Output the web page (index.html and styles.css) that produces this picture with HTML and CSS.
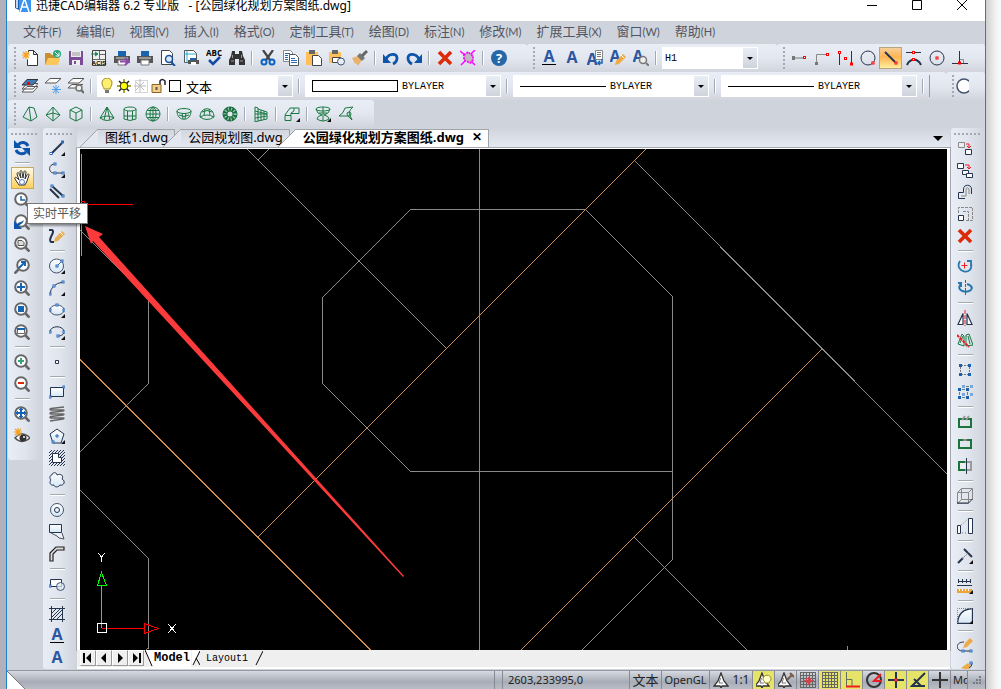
FILE: index.html
```html
<!DOCTYPE html>
<html lang="zh-CN">
  <head>
    <meta charset="UTF-8" />
    <meta name="viewport" content="width=device-width, initial-scale=1.0" />
    <title>迅捷CAD编辑器</title>
    <link rel="stylesheet" href="styles.css" />
  </head>

  <body>
    <!-- icon sprite -->
    <svg class="sprite" aria-hidden="true">
      <defs>
        <linearGradient id="pale" x1="0" y1="0" x2="0" y2="1">
          <stop offset="0" stop-color="#fff" />
          <stop offset="1" stop-color="#d5e6f5" />
        </linearGradient>
      </defs>
      <symbol id="corner" viewBox="0 0 16 16"><path d="M16 12v4h-4z" fill="#111" /></symbol>
      <symbol id="lens" viewBox="0 0 16 16">
        <circle cx="7" cy="7" r="5.8" fill="#fff" stroke="#666" stroke-width="2" />
        <path d="M11.5 11.5l4 4" stroke="#666" stroke-width="2.6" />
      </symbol>

      <!-- file toolbar -->
      <symbol id="new" viewBox="0 0 16 16">
        <path d="M6.5 3.5V.5h5l4 4v11h-10v-6M11.5.5v4h4" fill="#fff" stroke="#333" />
        <path d="M4 1v8M0 5h8M1 2l6 6M7 2L1 8" stroke="#f6a21b" stroke-width="1.2" />
      </symbol>
      <symbol id="open" viewBox="0 0 16 16">
        <path d="M0 3h5l2 2h6v10H0z" fill="#c9912e" /><path d="M3 8h12l-2 7H0z" fill="#ffc65a" />
        <circle cx="12" cy="4" r="4" fill="#27a577" /><path d="M10 2l4 4M14 2.5V6h-3.5" fill="none" stroke="#fff" />
      </symbol>
      <symbol id="save" viewBox="0 0 16 16">
        <path d="M1 1h14v14H1z" fill="#7b4a99" /><path d="M3 1h10v6H3zM4 10h8v5H4z" fill="#eee" /><path d="M4 3h8M4 5h8" stroke="#999" /><path d="M6 11h2v3H6z" fill="#7b4a99" />
      </symbol>
      <symbol id="acis" viewBox="0 0 16 16">
        <path d="M1.5.5h13v15h-13z" fill="#eee" stroke="#444" /><path d="M2 9.5h12M8.5 1v8M8 4.5h6" stroke="#666" />
        <path d="M0 4h6M4 2l3 2-3 2" fill="#198b5f" stroke="#198b5f" />
      </symbol>
      <symbol id="print" viewBox="0 0 16 16">
        <path d="M4 1h8v5H4z" fill="#1965ad" /><path d="M0 6h16v7H0z" fill="#555" /><path d="M2 8h12" stroke="#ddd" /><path d="M4 10h8v5H4z" fill="#fff" stroke="#777" />
      </symbol>
      <symbol id="export" viewBox="0 0 16 16">
        <use href="#print" /><path d="M6 11.5h8M11 8l4 3.5-4 3.5" fill="none" stroke="#9048ae" stroke-width="2" />
      </symbol>
      <symbol id="preview" viewBox="0 0 16 16">
        <path d="M1.5.5h8l3 3v11h-11z" fill="#fff" stroke="#444" /><circle cx="9" cy="9" r="3.5" fill="#d7eafa" stroke="#194f9b" stroke-width="1.5" /><path d="M11 12l4 4" stroke="#194f9b" stroke-width="2" />
      </symbol>
      <symbol id="pagesetup" viewBox="0 0 16 16">
        <path d="M1.5.5h9l3 3v9h-12z" fill="#fff" stroke="#555" /><path d="M4 1v12M1 4h12" stroke="#28a9d8" /><path d="M7 8h6v2H7z" fill="#1965ad" /><path d="M5 10h11v4H5z" fill="#555" /><path d="M8 12h5v3H8z" fill="#fff" />
      </symbol>
      <symbol id="find" viewBox="0 0 16 16">
        <path d="M3 1h3v3h4V1h3l1 5 2 4v5h-6V9H6v6H0v-5l2-4z" fill="#333" /><path d="M2 11h3M11 11h3M3.5 5v3M12.5 5v3" stroke="#999" />
      </symbol>
      <symbol id="cut" viewBox="0 0 16 16"><path d="M3 0l7 10M13 0L6 10" stroke="#444" stroke-width="2.2" /><circle cx="4" cy="12" r="2.5" class="bluering" /><circle cx="12" cy="12" r="2.5" class="bluering" /></symbol>
      <symbol id="copy" viewBox="0 0 16 16">
        <path d="M.5.5h7l2 2v9h-9z" fill="#fff" stroke="#888" /><path d="M6.5 4.5h6l3 3v8h-9z" fill="#fff" stroke="#555" /><path d="M2 3.5h5M2 5.5h3M2 7.5h3M2 9.5h3M8 8.5h4M8 10.5h6M8 12.5h6" stroke="#2467b3" />
      </symbol>
      <symbol id="paste" viewBox="0 0 16 16"><path d="M0 2h12v13H0z" fill="#ffc05a" /><path d="M3 0h6v4H3z" fill="#666" /><path d="M6.5 5.5h6l3 3v7h-9z" fill="#fff" stroke="#444" /></symbol>
      <symbol id="pasteblock" viewBox="0 0 16 16"><path d="M0 2h12v11H0z" fill="#ffc05a" /><path d="M3 0h6v4H3z" fill="#666" /><path d="M3.5 7.5h8v5h-8z" fill="#fff" stroke="#444" /><circle cx="12" cy="11.5" r="3.5" fill="#e5edf5" stroke="#405478" /></symbol>
      <symbol id="brush" viewBox="0 0 16 16"><path d="M0 8l6-2 4 4-4 6-2-3-1 1z" fill="#e8b36c" /><path d="M5 6l3-3 5 5-3 3z" fill="#777" /><path d="M10 6l5-5" stroke="#666" stroke-width="3" /></symbol>
      <symbol id="undo" viewBox="0 0 16 16"><path d="M3 9c3-6 11-6 11-1 0 3-2 5-4 6" fill="none" stroke="#0c55aa" stroke-width="2.8" /><path d="M0 4v9h8z" fill="#0c55aa" /></symbol>
      <symbol id="redo" viewBox="0 0 16 16"><use href="#undo" transform="translate(16 0) scale(-1 1)" /></symbol>
      <symbol id="delete" viewBox="0 0 16 16"><path d="M2 2l12 12M14 2L2 14" stroke="#db2b08" stroke-width="3.6" /></symbol>
      <symbol id="purge" viewBox="0 0 16 16"><path d="M0 1l5 4M15 0l-4 4M1 15l4-4M15 15l-4-4" stroke="#f0f" stroke-width="1.5" /><path d="M4 5l4-3 5 4v4l-3 3-6-3z" fill="#bbb" stroke="#f0f" stroke-width="1.8" stroke-dasharray="2 1" /></symbol>

      <!-- snaps -->
      <symbol id="snap-end" viewBox="0 0 16 16"><path d="M3 8h10" stroke="#777" /><path d="M1 6h3v4H1z" fill="#777" /><rect x="12.5" y="6.5" width="2" height="2" class="red" /></symbol>
      <symbol id="snap-near" viewBox="0 0 16 16"><path d="M2.5 13V4.5H13" class="gray" /><path d="M1 12h3v3H1z" fill="#777" /><rect x="12.5" y="3.5" width="2" height="2" class="red" /></symbol>
      <symbol id="snap-mid" viewBox="0 0 16 16"><path d="M2.500 3v12M14.500 1v12" class="ink" /><rect x="1.500" y="1.500" width="2" height="2" class="red" /><rect x="7.500" y="7.500" width="2" height="2" class="red" /><rect x="13.500" y="13" width="2" height="2" class="red" /></symbol>
      <symbol id="snap-circle" viewBox="0 0 16 16"><circle cx="8" cy="8" r="7" class="ink" /><rect x="12" y="12" width="2" height="2" class="red" /></symbol>
      <symbol id="snap-line" viewBox="0 0 16 16"><path d="M2 2l10 10" class="ink thick" /><rect x="12" y="12" width="2" height="2" class="red" /></symbol>
      <symbol id="snap-tan" viewBox="0 0 16 16"><path d="M0 2.500h15" class="ink" /><path d="M1 15c3-7 11-7 14 0" class="ink thick" /><rect x="6.500" y="1.500" width="2" height="2" class="red" /><rect x="6.500" y="8.500" width="2" height="2" class="red" /></symbol>
      <symbol id="snap-centre" viewBox="0 0 16 16"><circle cx="8" cy="8" r="7" class="ink" /><rect x="7" y="7" width="2" height="2" class="red" /></symbol>
      <symbol id="snap-perp" viewBox="0 0 16 16"><path d="M7.500 1v12M0 13.500h16" class="ink" /><path d="M8 9.500h3.500V13" class="gray" /><rect x="6.500" y="12" width="2" height="2" class="red" /></symbol>
      <symbol id="disc" viewBox="0 0 16 16"><circle cx="8" cy="8" r="7" fill="#fff" stroke="#44536c" stroke-width="1.5" /></symbol>

      <!-- layers -->
      <symbol id="layers" viewBox="0 0 16 16"><path d="M5 8.500h11L11 14H0zM5 5.500h11L11 11H0z" class="sheet" /><path d="M5 1.500h11L11 7H0z" fill="#407cb5" stroke="#333" /><path d="M5 4h3v3H5z" fill="#f00" /></symbol>
      <symbol id="layer-new" viewBox="0 0 16 16"><path d="M5 .5h11L11 5H0z" class="sheet" /><path d="M11 7v9M7 11.500h9M8 8l6 7M14 8l-6 7" stroke="#4a9be9" /></symbol>
      <symbol id="layer-find" viewBox="0 0 16 16"><path d="M5 .5h11L11 5H0zM4 6.500h11M4 6.500L0 10h8" class="sheet" /><circle cx="11" cy="10" r="3" fill="#eee" stroke="#777" stroke-width="1.500" /><path d="M13 12l3 3" stroke="#666" stroke-width="2" /></symbol>
      <symbol id="bulb" viewBox="0 0 16 16"><path d="M5 11c0-2-2-3-2-6a5 5 0 0 1 10 0c0 3-2 4-2 6z" fill="#ffef70" stroke="#9c8b20" /><path d="M6 12h4v3H6z" fill="#777" /></symbol>
      <symbol id="sun" viewBox="0 0 16 16"><path d="M8 1v14M1 8h14M3 3l10 10M13 3L3 13" stroke="#222" stroke-width="1.500" /><path d="M8 1v14M1 8h14" stroke="#ff0" /><circle cx="8" cy="8" r="3.800" fill="#ff0" stroke="#222" /></symbol>
      <symbol id="freeze" viewBox="0 0 16 16"><path d="M2.500 2.500h12v12h-12z" fill="none" stroke="#aaa" stroke-dasharray="1 1" /><path d="M7 1v13M1 8h12M3 4l8 8M11 4l-8 8" stroke="#bbb" /></symbol>
      <symbol id="unlock" viewBox="0 0 16 16"><path d="M10 7V3q2-3 5 0v4" fill="none" stroke="#223" stroke-width="1.500" /><path d="M2 6.500h9v8H2z" fill="#eecf8c" stroke="#8c651e" /><path d="M6.500 9v3" stroke="#654" stroke-width="2" /></symbol>

      <!-- surfaces -->
      <symbol id="wedge" viewBox="0 0 16 16"><path d="M1 11L7 1l5 1 3 9-6 4-8-4M7 1l2 14" class="green" /></symbol>
      <symbol id="pyramid" viewBox="0 0 16 16"><path d="M8 1l7 8-7 6-7-6zM8 1v14M1 9l7-2 7 2" class="green" /></symbol>
      <symbol id="cube" viewBox="0 0 16 16"><path d="M8 1l6 3v8l-6 3-6-3V4zM2 4l6 3 6-3M8 7v8" class="green" /></symbol>
      <symbol id="cone" viewBox="0 0 16 16"><path d="M8 1L1 12q7 5 14 0zM8 1L5 14M8 1l3 13M1 12q7-4 14 0" class="green" /></symbol>
      <symbol id="cylinder" viewBox="0 0 16 16"><ellipse cx="8" cy="3" rx="6" ry="2" class="green" /><path d="M2 3v10q6 3 12 0V3M5.500 5v9M10.500 5v9M2 10h12" class="green" /></symbol>
      <symbol id="sphere" viewBox="0 0 16 16"><circle cx="8" cy="8" r="7" class="green" /><ellipse cx="8" cy="8" rx="3" ry="7" class="green" /><path d="M1 8h14M2 4.500h12M2 11.500h12M8 1v14" class="green" /></symbol>
      <symbol id="bowl" viewBox="0 0 16 16"><ellipse cx="8" cy="5" rx="7" ry="2.500" class="green" /><path d="M1 5c0 11 14 11 14 0M3 9q5 3 10 0M6 7l1 6M10 7l-1 6" class="green" /></symbol>
      <symbol id="dome" viewBox="0 0 16 16"><path d="M1 11C1 0 15 0 15 11q-7 5-14 0zM1 11q7-4 14 0M3 6q5-3 10 0M6 3L5 9M10 3l1 6" class="green" /></symbol>
      <symbol id="torus" viewBox="0 0 16 16"><circle cx="8" cy="8" r="5" fill="none" stroke="#1a7140" stroke-width="5" /><circle cx="8" cy="8" r="5" fill="none" stroke="#a6c7b4" stroke-width="3" stroke-dasharray="1 2" /></symbol>
      <symbol id="mesh" viewBox="0 0 16 16"><path d="M2 1l3 1v13l-3 1zM5 3l9 3v7l-9 2M2 5l12 3M2 8h12M2 12l12-2M8 4v11M11 5v9" class="green" /></symbol>
      <symbol id="extrude" viewBox="0 0 16 16"><path d="M1 9.500h6v5H1zM1 9l5-7h9v5.500H7M7 9V7l3-2V2" class="green" /><use href="#corner" /></symbol>
      <symbol id="revolve" viewBox="0 0 16 16"><ellipse cx="8" cy="3" rx="7" ry="2" class="green" /><path d="M1 3q1 5 6 6-5 1-5 4 6 4 12 0 0-3-5-4 5-1 6-6M8 1v14M4 7h8" class="green" /><use href="#corner" /></symbol>
      <symbol id="edge" viewBox="0 0 16 16"><path d="M1 10q5-3 6-8l8-1q-3 2-4 6l3 7M1 10h9l4 4" class="green" /><circle cx="11" cy="8" r="2" class="green" /></symbol>

      <!-- view toolbar -->
      <symbol id="regen" viewBox="0 0 16 16"><path d="M4 5c3-4 8-3 10 1M12 12c-3 3-8 2-10-2" fill="none" stroke="#0c55aa" stroke-width="3" /><path d="M0 0v8h8zM16 16V8H8z" fill="#0c55aa" /></symbol>
      <symbol id="hand" viewBox="0 0 16 16"><path d="M5 15L1 9c-1-2 1-2 2-1l2 2L3 4c0-2 2-2 2 0l2 4-1-6c0-2 2-2 2 0l1 6 1-6c0-2 2-1 2 0l-1 7 2-4c1-2 2-1 2 0l-2 6-2 4z" fill="#fff" stroke="#333" /><circle cx="8" cy="12" r="2.500" fill="#fff" stroke="#557ab5" /></symbol>
      <symbol id="zoom-time" viewBox="0 0 16 16"><use href="#lens" /><path d="M7 4v4h4" fill="none" stroke="#1761ae" stroke-width="1.500" /></symbol>
      <symbol id="zoom-back" viewBox="0 0 16 16"><use href="#lens" /><path d="M0 7v8h8l-3-3c1-2 4-2 5-6-2 2-5 2-7 4z" fill="#0c55aa" /></symbol>
      <symbol id="zoom-page" viewBox="0 0 16 16"><use href="#lens" /><path d="M4 4.500h4l2 2v3H4z" fill="#ddd" stroke="#555" /></symbol>
      <symbol id="zoom-dyn" viewBox="0 0 16 16"><use href="#lens" transform="translate(16 0) scale(-1 1)" /><path d="M5 10l6-6M7 4h4v4" class="blue" /></symbol>
      <symbol id="zoom-centre" viewBox="0 0 16 16"><use href="#lens" /><path d="M7 3v8M3 7h8" class="blue" /></symbol>
      <symbol id="zoom-object" viewBox="0 0 16 16"><use href="#lens" /><path d="M4 4h6v6H4z" fill="#1565b4" /></symbol>
      <symbol id="zoom-window" viewBox="0 0 16 16"><use href="#lens" /><path d="M3.500 4.500h7v5h-7z" fill="#fff" stroke="#666" /><path d="M3 5h8" stroke="#1565b4" stroke-width="2" /></symbol>
      <symbol id="zoom-in" viewBox="0 0 16 16"><use href="#lens" /><path d="M7 4v6M4 7h6" stroke="#35a47b" stroke-width="2" /></symbol>
      <symbol id="zoom-out" viewBox="0 0 16 16"><use href="#lens" /><path d="M4 7h6" stroke="#dc2800" stroke-width="2" /></symbol>
      <symbol id="zoom-all" viewBox="0 0 16 16"><use href="#lens" /><path d="M7 2v10M2 7h10" class="blue" /><path d="M5 3.500h4M5 10.500h4M3.500 5v4M10.500 5v4" stroke="#1565b4" /></symbol>
      <symbol id="eye" viewBox="0 0 16 16"><path d="M1 10q7-8 15 0-8 7-15 0z" fill="#fff" stroke="#555" stroke-width="1.500" /><circle cx="9" cy="10" r="3.500" fill="#333" /><circle cx="10" cy="9" r="1" fill="#fff" /><path d="M4 0v8M0 4h8M1 1l6 6M7 1L1 7" stroke="#f6a21b" stroke-width="1.200" /></symbol>

      <!-- draw toolbar -->
      <symbol id="line" viewBox="0 0 16 16"><path d="M2 14L13 3" class="ink thick" /><rect x="1" y="12.500" width="2" height="2" class="node" /><rect x="12.500" y="1" width="2" height="2" class="node" /><use href="#corner" /></symbol>
      <symbol id="pline" viewBox="0 0 16 16"><path d="M6 2C-1 2-1 11 5 11h9" class="ink" /><rect x="5" y="1" width="2" height="2" class="node" /><rect x="5" y="10" width="2" height="2" class="node" /><rect x="13" y="10" width="2" height="2" class="node" /><use href="#corner" /></symbol>
      <symbol id="mline" viewBox="0 0 16 16"><path d="M3 2l11 10M1 5l9 9" class="ink thick" /><rect x="2" y="1" width="2" height="2" class="node" /><rect x="13" y="11" width="2" height="2" class="node" /></symbol>
      <symbol id="sketch" viewBox="0 0 16 16"><path d="M0 2h3c4 2-5 9-1 12h3" class="ink thick" /><path d="M5 14l1-4 7-7 3 3-7 7z" fill="#e8ae53" /><path d="M11 4l3 3" stroke="#fff" /></symbol>
      <symbol id="circle" viewBox="0 0 16 16"><circle cx="7.500" cy="8" r="7" fill="url(#pale)" stroke="#44536c" /><path d="M8 8l4-4" stroke="#2467b3" /><rect x="7" y="7" width="2" height="2" class="node" /><rect x="12" y="2" width="2" height="2" class="node" /><use href="#corner" /></symbol>
      <symbol id="arc" viewBox="0 0 16 16"><path d="M1 14Q2 4 14 2" class="ink" /><rect x="0" y="13" width="2" height="2" class="node" /><rect x="4" y="5" width="2" height="2" class="node" /><rect x="13" y="1" width="2" height="2" class="node" /><use href="#corner" /></symbol>
      <symbol id="ellipse" viewBox="0 0 16 16"><ellipse cx="8" cy="8" rx="7" ry="5" fill="url(#pale)" stroke="#44536c" /><rect x="7" y="2" width="2" height="2" class="node" /><rect x="0" y="7" width="2" height="2" class="node" /><rect x="14" y="7" width="2" height="2" class="node" /><use href="#corner" /></symbol>
      <symbol id="earc" viewBox="0 0 16 16"><path d="M1 8c0-7 14-7 14 0 0 3-4 4-6 4" class="ink" /><rect x="0" y="7" width="2" height="2" class="node" /><rect x="14" y="7" width="2" height="2" class="node" /><rect x="8" y="11" width="2" height="2" class="node" /><use href="#corner" /></symbol>
      <symbol id="point" viewBox="0 0 16 16"><path d="M6.500 6.500h3v3h-3z" fill="#fff" stroke="#25354e" /></symbol>
      <symbol id="rect" viewBox="0 0 16 16"><path d="M1.500 3.500h13v9h-13z" fill="url(#pale)" stroke="#25354e" /><rect x="0" y="12" width="2" height="2" class="node" /><rect x="14" y="2" width="2" height="2" class="node" /></symbol>
      <symbol id="helix" viewBox="0 0 16 16"><path d="M15 1L2 2.500q-2 1 0 1.500h12q2 0 0 1L2 6.500q-2 1 0 1.500h12q2 0 0 1L2 10.500q-2 1 0 1.500h12q2 0 0 1L1 15" fill="none" stroke="#666" stroke-width="1.500" /></symbol>
      <symbol id="polygon" viewBox="0 0 16 16"><path d="M8 1l7 5-3 9H4L1 6z" fill="url(#pale)" stroke="#25354e" /><path d="M8 6v4M6 8h4" stroke="#2467b3" /><rect x="3" y="13" width="2" height="2" class="node" /><use href="#corner" /></symbol>
      <symbol id="boundary" viewBox="0 0 16 16"><path d="M0 3l3-3M0 6l6-6M0 9l9-9M0 12l12-12M0 15L15 0M1 17L17 1M4 17L17 4M7 17L17 7M10 17l7-7M13 17l4-4" stroke="#25354e" /><path d="M3.500 3.500h6v4h3v5h-9z" fill="#fff" stroke="#25354e" /></symbol>
      <symbol id="cloud" viewBox="0 0 16 16"><path d="M3 3c0-3 5-3 5 0 4-2 7 1 5 4 4 2 2 7-2 6-2 3-6 2-6 0-4 1-5-3-3-5-2-2-1-5 1-5z" fill="url(#pale)" stroke="#25354e" /></symbol>
      <symbol id="donut" viewBox="0 0 16 16"><circle cx="8" cy="8" r="6.500" fill="url(#pale)" stroke="#44536c" /><circle cx="8" cy="8" r="2.500" class="ink" /></symbol>
      <symbol id="wipeout" viewBox="0 0 16 16"><path d="M.5.5h12v8H.5z" fill="url(#pale)" stroke="#25354e" /><path d="M2 9l6 3 2 2 5 1-2-6" fill="#eee" stroke="#44536c" /></symbol>
      <symbol id="trace" viewBox="0 0 16 16"><path d="M1 15V7l6-6h8v3H8L4 8v7z" fill="#ddd" stroke="#222" stroke-width="1.200" /></symbol>
      <symbol id="region" viewBox="0 0 16 16"><path d="M1.500 3.500h11v7h-11z" fill="#fff" stroke="#25354e" /><circle cx="11.500" cy="10.500" r="4" fill="#dce9f5" fill-opacity=".7" stroke="#44536c" /><rect x="0" y="9" width="2" height="2" class="node" /></symbol>
      <symbol id="hatch" viewBox="0 0 16 16"><path d="M0 2.500h16M0 13.500h16M2.500 0v16M13.500 0v16M3 7l4-4M3 11l8-8M4 13l9-9M8 13l5-5" class="ink" /></symbol>

      <!-- modify toolbar -->
      <symbol id="moveto" viewBox="0 0 16 16"><path d="M1.500 2.500h6v5h-6z" fill="#eee" stroke="#888" /><path d="M8.500 9.500h6v5h-6z" fill="#fff" stroke="#25354e" /><path d="M9 4h3v3M10 6l2 2 2-2" class="redline" /></symbol>
      <symbol id="copyto" viewBox="0 0 16 16"><path d="M.5 1.500h6v5h-6zM5.500 8.500h6v4h-6z" fill="#fff" stroke="#25354e" /><path d="M9.500 11.500h6v4h-6z" fill="#fff" stroke="#25354e" /><path d="M8 3h4v3M10 5l2 2 2-2" class="redline" /></symbol>
      <symbol id="offset" viewBox="0 0 16 16"><path d="M8 14.500H1.500V8.500h5V5c0-5 8-5 8 0v5" class="ink" /><path d="M4 12h5V6c0-3 3-3 3 0v4" class="gray" /></symbol>
      <symbol id="scale" viewBox="0 0 16 16"><path d="M1.500 7V1.500h14v13H9M6 5.500h5.500v9" fill="none" stroke="#888" stroke-dasharray="3 1" /><path d="M1.500 9.500h5v5h-5z" fill="#fff" stroke="#25354e" /></symbol>
      <symbol id="rotate" viewBox="0 0 16 16"><path d="M3 3c-7 11 14 16 11 2M10 3h4v5" fill="none" stroke="#2778ad" stroke-width="1.800" /><path d="M7.500 4.500v6M4.500 7.500h6" class="redline" /></symbol>
      <symbol id="rotate3d" viewBox="0 0 16 16"><path d="M4 4c-7 7 9 11 11 4-1-3-5-4-5-4M4 7V3H1" fill="none" stroke="#2778ad" stroke-width="2" /><path d="M8.500 0v16" class="redline" stroke-dasharray="3 1" /></symbol>
      <symbol id="mirror" viewBox="0 0 16 16"><path d="M1 14.500l5-11v11zM15 14.500l-5-11v11z" fill="#fff" stroke="#25354e" stroke-width="1.200" /><path d="M8 0v16" class="redline" stroke-dasharray="4 1" /></symbol>
      <symbol id="mirror3d" viewBox="0 0 16 16"><path d="M1 12L5 2l2 2v10zM9 14V3l3-1 4 11zM3 11l3-7M11 4l2 8" class="green" /><path d="M0 3l12 12" class="redline" stroke-width="2" stroke-dasharray="3 1" /></symbol>
      <symbol id="array" viewBox="0 0 16 16"><path d="M4 3.500h8M4 12.500h8M3.500 5v6M12.500 5v6" stroke="#777" stroke-dasharray="2 1" /><path d="M2 2h3v3H2zM11 2h3v3h-3zM2 11h3v3H2zM11 11h3v3h-3z" fill="#1861b1" /></symbol>
      <symbol id="array3d" viewBox="0 0 16 16"><path d="M5 1h3v3H5zM13 1h3v3h-3zM5 9h3v3H5zM13 9h3v3h-3z" fill="#7aa8d7" /><path d="M1 4h3v3H1zM9 4h3v3H9zM1 12h3v3H1zM9 12h3v3H9z" fill="#1861b1" /><path d="M5 5.500h3M5 13.500h3M2.500 8v3M10.500 8v3M9 2.500h3" stroke="#777" /></symbol>
      <symbol id="break" viewBox="0 0 16 16"><path d="M2 5h12v8H2z" fill="none" stroke="#1b743c" stroke-width="2" /><path d="M5 6l3-4M9 6l3-4" stroke="#999" stroke-width="2" /></symbol>
      <symbol id="join" viewBox="0 0 16 16"><path d="M2 4h12v8H2z" fill="none" stroke="#1b743c" stroke-width="2" /><path d="M6 4h4" stroke="#888" stroke-width="2" /></symbol>
      <symbol id="trim" viewBox="0 0 16 16"><path d="M8 4H2v8h6" fill="#eee" stroke="#1b743c" stroke-width="2" /><path d="M8 4h6v8H8" fill="none" stroke="#999" stroke-width="2" /><path d="M9.500 0v16" class="ink" /></symbol>
      <symbol id="solid" viewBox="0 0 16 16"><path d="M4.500.5h11v11h-11zM.5 4.500h11v11H.5zM4.500.5l-4 4M15.500.5l-4 4M4.500 11.500l-4 4" class="gray" /><path d="M0 15h11.500l4-4" class="ink" /></symbol>
      <symbol id="stretch" viewBox="0 0 16 16"><path d="M.5 7.500h3v8h-3zM11.500.5h4v15h-4z" fill="#fff" stroke="#25354e" /><path d="M4 7l7-6M5 15h6" stroke="#777" stroke-dasharray="1 2" /></symbol>
      <symbol id="extend" viewBox="0 0 16 16"><path d="M7 1l8 8M1 15l5-5" class="ink thick" /><path d="M5 11l7-7" stroke="#777" stroke-dasharray="2 1" /><use href="#corner" /></symbol>
      <symbol id="measure" viewBox="0 0 16 16"><path d="M1.500 1v4M5.500 1v4M9.500 1v4M13.500 1v4M0 7.500h15M1 3.500h13" class="ink" /><path d="M0 11h15v4H0z" fill="#eaa63b" /><path d="M2.500 11v2M5.500 11v2M8.500 11v2M11.500 11v2" stroke="#fff" /><use href="#corner" /></symbol>
      <symbol id="fillet" viewBox="0 0 16 16"><path d="M.5 15.500C1 6 6 1 15.500.5v15z" fill="url(#pale)" stroke="#25354e" stroke-width="1.300" /><path d="M.5 15V.5H15" class="gray" stroke-dasharray="1 1" /><use href="#corner" /></symbol>
      <symbol id="pedit" viewBox="0 0 16 16"><path d="M7 4C-2 4-2 13 6 13h8" class="ink" /><path d="M6 10l2-5 5-5 3 3-6 6z" fill="#edaa46" /><rect x="5" y="12" width="2" height="2" class="node" /><rect x="13" y="12" width="2" height="2" class="node" /></symbol>
      <symbol id="splinedit" viewBox="0 0 16 16"><path d="M4 8l7-5 3 3-3 4z" fill="#edaa46" /><path d="M12 8q3-1 3-5" class="ink" /><rect x="13" y="2" width="2" height="2" class="node" /></symbol>

      <!-- status bar -->
      <symbol id="compass" viewBox="0 0 16 16"><path d="M8 1l3 8 4 5H9l-1 2-1-2H1l4-5z" fill="#fff" stroke="#333" stroke-width="1.300" /><path d="M7.500 6L6 11h4" fill="none" stroke="#777" /></symbol>
      <symbol id="compass-bulb" viewBox="0 0 16 16"><use href="#compass" x="-2" /><path d="M9 11c0-2-2-2-2-4 0-5 8-5 8 0 0 2-2 2-2 4z" fill="#ffffc5" stroke="#998b28" /></symbol>
      <symbol id="compass-pen" viewBox="0 0 16 16"><use href="#compass" x="-2" /><path d="M9 8l5-5M12 1l4 4" stroke="#775b45" stroke-width="2" /></symbol>
      <symbol id="grid" viewBox="0 0 16 16"><path d="M0 .5h16M0 3.500h16M0 6.500h16M0 9.500h16M0 12.500h16M.5 0v16M3.500 0v16M6.500 0v16M9.500 0v16M12.500 0v16M15.500 0v16M0 15.500h16" stroke="#666" /></symbol>
      <symbol id="gridsnap" viewBox="0 0 16 16"><use href="#grid" /><path d="M3 8.500h11M8.500 5v8M6.500 6.500h4v4h-4z" stroke="#d2474d" fill="none" /></symbol>
      <symbol id="ortho" viewBox="0 0 16 16"><path d="M2.500 0v14M3 7.500h5V14" stroke="#667060" fill="none" /><path d="M2 14.500h14" class="redline" stroke-width="2" /></symbol>
      <symbol id="polar" viewBox="0 0 16 16"><circle cx="8" cy="8" r="7" fill="none" stroke="#333" stroke-width="2" /><path d="M15 2L8 9h8" class="redline" stroke-width="2" /></symbol>
      <symbol id="osnap" viewBox="0 0 16 16"><path d="M8 0v16M0 8h16" class="ink thick" /><rect x="7" y="7" width="2" height="2" class="red" /></symbol>
      <symbol id="otrack" viewBox="0 0 16 16"><path d="M15 1L2 14h13M4 7l7 7" class="ink thick" /></symbol>
      <symbol id="cross" viewBox="0 0 16 16"><path d="M8 0v16M0 8h16" stroke="#333" stroke-width="2" /></symbol>
    </svg>

    <div class="desktop">
      <div class="window">
        <header class="titlebar">
          <svg class="logo" viewBox="0 0 16 12" aria-hidden="true">
            <path d="M0 0h4v10l-4-2z" fill="#1b5fb4" /><path d="M4 0h12v12H4z" fill="#3a93ee" />
            <path d="M2 0v8M5 12L9 0h1l4 12M7 7h5" fill="none" stroke="#fff" stroke-width="1.500" />
          </svg>
          <h1>迅捷CAD编辑器 6.2 专业版 &nbsp; - [公园绿化规划方案图纸.dwg]</h1>
          <div class="window-buttons">
            <button aria-label="最小化"><svg viewBox="0 0 10 10"><path d="M0 5.500h10" /></svg></button>
            <button aria-label="最大化"><svg viewBox="0 0 10 10"><path d="M.5.5h9v9h-9z" /></svg></button>
            <button aria-label="关闭"><svg viewBox="0 0 10 10"><path d="M0 0l10 10M10 0L0 10" /></svg></button>
          </div>
        </header>

        <nav class="menu">
          <a href="#">文件<span>(F)</span></a>
          <a href="#">编辑<span>(E)</span></a>
          <a href="#">视图<span>(V)</span></a>
          <a href="#">插入<span>(I)</span></a>
          <a href="#">格式<span>(O)</span></a>
          <a href="#">定制工具<span>(T)</span></a>
          <a href="#">绘图<span>(D)</span></a>
          <a href="#">标注<span>(N)</span></a>
          <a href="#">修改<span>(M)</span></a>
          <a href="#">扩展工具<span>(X)</span></a>
          <a href="#">窗口<span>(W)</span></a>
          <a href="#">帮助<span>(H)</span></a>
        </nav>

        <div class="toolbar-row">
          <div class="toolbar spaced">
            <i class="grip"></i>
            <button aria-label="新建"><svg><use href="#new" /></svg></button>
            <button aria-label="打开"><svg><use href="#open" /></svg></button>
            <button aria-label="保存"><svg><use href="#save" /></svg></button>
            <button aria-label="ACIS"><svg viewBox="0 0 16 16"><use href="#acis" /><text x="8" y="15" text-anchor="middle" class="tiny">ACIS</text></svg></button>
            <button aria-label="输出"><svg><use href="#export" /></svg></button>
            <button aria-label="打印"><svg><use href="#print" /></svg></button>
            <button aria-label="打印预览"><svg><use href="#preview" /></svg></button>
            <button aria-label="页面设置"><svg><use href="#pagesetup" /></svg></button>
            <button aria-label="拼写检查"><svg viewBox="0 0 16 16"><text x="8" y="6" text-anchor="middle" class="abc">ABC</text><path d="M3 10l4 4 7-7" fill="none" stroke="#1449a6" stroke-width="2.500" /></svg></button>
            <button aria-label="查找"><svg><use href="#find" /></svg></button>
            <i class="sep"></i>
            <button aria-label="剪切"><svg><use href="#cut" /></svg></button>
            <button aria-label="复制"><svg><use href="#copy" /></svg></button>
            <button aria-label="粘贴"><svg><use href="#paste" /></svg></button>
            <button aria-label="粘贴为块"><svg><use href="#pasteblock" /></svg></button>
            <button aria-label="特性匹配"><svg><use href="#brush" /></svg></button>
            <i class="sep"></i>
            <button aria-label="撤销"><svg><use href="#undo" /></svg></button>
            <button aria-label="重做"><svg><use href="#redo" /></svg></button>
            <i class="sep"></i>
            <button aria-label="删除"><svg><use href="#delete" /></svg></button>
            <button aria-label="清理"><svg><use href="#purge" /></svg></button>
            <i class="sep"></i>
            <button aria-label="帮助"><svg viewBox="0 0 16 16"><circle cx="8" cy="8" r="8" fill="#2567a8" /><text x="8" y="13" text-anchor="middle" class="question">?</text></svg></button>
          </div>
          <div class="toolbar spaced">
            <i class="grip"></i>
            <button aria-label="多行文字"><svg viewBox="0 0 16 16"><text x="8" y="12" text-anchor="middle" class="letter">A</text><path d="M1 14.500h14" stroke="#000" /></svg></button>
            <button aria-label="单行文字"><svg viewBox="0 0 16 16"><text x="8" y="13" text-anchor="middle" class="letter">A</text></svg></button>
            <button aria-label="文字导入">
              <svg viewBox="0 0 16 16"><text x="5" y="15" text-anchor="middle" class="letter">A</text><path d="M8.500.5h7v9h-7z" fill="#fff" stroke="#888" /><path d="M10 2.500h4M10 4.500h4M10 6.500h4" stroke="#777" /><path d="M15 9v4h-4M13 11l-2 2 2 2" fill="none" stroke="#1c62b2" stroke-width="1.500" /></svg>
            </button>
            <button aria-label="编辑文字">
              <svg viewBox="0 0 16 16"><text x="5" y="12" text-anchor="middle" class="letter">A</text><path d="M5 15l1-4 7-7 3 3-7 7z" fill="#edaa46" /><path d="M11 5l3 3" stroke="#fff" /></svg>
            </button>
            <button aria-label="查找文字">
              <svg viewBox="0 0 16 16"><text x="5" y="12" text-anchor="middle" class="letter">A</text><circle cx="10" cy="10" r="3.500" fill="#eee" stroke="#777" stroke-width="1.500" /><path d="M13 13l3 3" stroke="#777" stroke-width="2" /></svg>
            </button>
            <i class="sep"></i>
            <div class="combo small">
              <select aria-label="文字样式"><option>H1</option></select>
              <i class="drop"></i>
            </div>
          </div>
          <div class="toolbar fill">
            <i class="grip"></i>
            <button aria-label="端点"><svg><use href="#snap-end" /></svg></button>
            <button aria-label="最近点"><svg><use href="#snap-near" /></svg></button>
            <button aria-label="中点"><svg><use href="#snap-mid" /></svg></button>
            <button aria-label="象限点"><svg><use href="#snap-circle" /></svg></button>
            <button class="on" aria-label="延长线"><svg><use href="#snap-line" /></svg></button>
            <button aria-label="切点"><svg><use href="#snap-tan" /></svg></button>
            <button aria-label="圆心"><svg><use href="#snap-centre" /></svg></button>
            <button aria-label="垂足"><svg><use href="#snap-perp" /></svg></button>
          </div>
        </div>

        <div class="toolbar-row">
          <div class="toolbar fill">
            <i class="grip"></i>
            <button aria-label="图层"><svg><use href="#layers" /></svg></button>
            <button aria-label="新图层"><svg><use href="#layer-new" /></svg></button>
            <button aria-label="查找图层"><svg><use href="#layer-find" /></svg></button>
            <i class="sep"></i>
            <div class="combo layer">
              <svg><use href="#bulb" /></svg>
              <svg><use href="#sun" /></svg>
              <svg><use href="#freeze" /></svg>
              <svg><use href="#unlock" /></svg>
              <b class="swatch square"></b>
              <select aria-label="图层列表"><option>文本</option></select>
              <i class="drop"></i>
            </div>
            <i class="sep"></i>
            <div class="combo">
              <b class="swatch"></b>
              <select aria-label="颜色"><option>BYLAYER</option></select>
              <i class="drop"></i>
            </div>
            <i class="sep"></i>
            <div class="combo">
              <b class="rule"></b>
              <select aria-label="线型"><option>BYLAYER</option></select>
              <i class="drop"></i>
            </div>
            <i class="sep"></i>
            <div class="combo">
              <b class="rule"></b>
              <select aria-label="线宽"><option>BYLAYER</option></select>
              <i class="drop"></i>
            </div>
            <i class="sep"></i>
            <i class="bar"></i>
          </div>
          <div class="toolbar clipped">
            <i class="grip"></i>
            <button aria-label="圆"><svg><use href="#disc" /></svg></button>
          </div>
        </div>

        <div class="toolbar-row last">
          <div class="toolbar spaced">
            <i class="grip"></i>
            <button aria-label="楔体"><svg><use href="#wedge" /></svg></button>
            <button aria-label="棱锥"><svg><use href="#pyramid" /></svg></button>
            <button aria-label="长方体"><svg><use href="#cube" /></svg></button>
            <i class="sep"></i>
            <button aria-label="圆锥"><svg><use href="#cone" /></svg></button>
            <button aria-label="圆柱"><svg><use href="#cylinder" /></svg></button>
            <button aria-label="球体"><svg><use href="#sphere" /></svg></button>
            <i class="sep"></i>
            <button aria-label="下半球"><svg><use href="#bowl" /></svg></button>
            <button aria-label="上半球"><svg><use href="#dome" /></svg></button>
            <button aria-label="圆环"><svg><use href="#torus" /></svg></button>
            <i class="sep"></i>
            <button aria-label="网格"><svg><use href="#mesh" /></svg></button>
            <i class="sep"></i>
            <button aria-label="拉伸"><svg><use href="#extrude" /></svg></button>
            <i class="sep"></i>
            <button aria-label="旋转曲面"><svg><use href="#revolve" /></svg></button>
            <button aria-label="边界曲面"><svg><use href="#edge" /></svg></button>
          </div>
        </div>

        <main class="workspace">
          <div class="sidebar short">
            <i class="grip"></i>
            <button aria-label="重生成"><svg><use href="#regen" /></svg></button>
            <i class="sep"></i>
            <button class="hover" aria-describedby="tip" aria-label="实时平移">
              <svg><use href="#hand" /></svg>
              <span class="tooltip" id="tip" role="tooltip">实时平移</span>
            </button>
            <button aria-label="实时缩放"><svg><use href="#zoom-time" /></svg></button>
            <button aria-label="上一视图"><svg><use href="#zoom-back" /></svg></button>
            <button aria-label="页面缩放"><svg><use href="#zoom-page" /></svg></button>
            <button aria-label="动态缩放"><svg><use href="#zoom-dyn" /></svg></button>
            <button aria-label="中心缩放"><svg><use href="#zoom-centre" /></svg></button>
            <button aria-label="对象缩放"><svg><use href="#zoom-object" /></svg></button>
            <button aria-label="窗口缩放"><svg><use href="#zoom-window" /></svg></button>
            <i class="sep"></i>
            <button aria-label="放大"><svg><use href="#zoom-in" /></svg></button>
            <button aria-label="缩小"><svg><use href="#zoom-out" /></svg></button>
            <i class="sep"></i>
            <button aria-label="全部缩放"><svg><use href="#zoom-all" /></svg></button>
            <button aria-label="视图"><svg><use href="#eye" /></svg></button>
          </div>

          <div class="sidebar">
            <i class="grip"></i>
            <button aria-label="直线"><svg><use href="#line" /></svg></button>
            <button aria-label="多段线"><svg><use href="#pline" /></svg></button>
            <button aria-label="双线"><svg><use href="#mline" /></svg></button>
            <button aria-label="样条"><svg><use href="#arc" /></svg></button>
            <button aria-label="徒手画"><svg><use href="#sketch" /></svg></button>
            <i class="sep"></i>
            <button aria-label="圆"><svg><use href="#circle" /></svg></button>
            <button aria-label="圆弧"><svg><use href="#arc" /></svg></button>
            <button aria-label="椭圆"><svg><use href="#ellipse" /></svg></button>
            <button aria-label="椭圆弧"><svg><use href="#earc" /></svg></button>
            <i class="sep"></i>
            <button aria-label="点"><svg><use href="#point" /></svg></button>
            <i class="sep"></i>
            <button aria-label="矩形"><svg><use href="#rect" /></svg></button>
            <button aria-label="螺旋"><svg><use href="#helix" /></svg></button>
            <button aria-label="多边形"><svg><use href="#polygon" /></svg></button>
            <button aria-label="边界"><svg><use href="#boundary" /></svg></button>
            <button aria-label="云线"><svg><use href="#cloud" /></svg></button>
            <i class="sep"></i>
            <button aria-label="圆环"><svg><use href="#donut" /></svg></button>
            <button aria-label="擦除"><svg><use href="#wipeout" /></svg></button>
            <button aria-label="轨迹"><svg><use href="#trace" /></svg></button>
            <i class="sep"></i>
            <button aria-label="面域"><svg><use href="#region" /></svg></button>
            <i class="sep"></i>
            <button aria-label="填充"><svg><use href="#hatch" /></svg></button>
            <button aria-label="多行文字"><svg viewBox="0 0 16 16"><text x="8" y="12" text-anchor="middle" class="letter">A</text><path d="M1 14.500h14" stroke="#000" /></svg></button>
            <button aria-label="单行文字"><svg viewBox="0 0 16 16"><text x="8" y="13" text-anchor="middle" class="letter">A</text></svg></button>
          </div>

          <section class="document">
            <div class="tabs">
              <a class="tab" href="#">图纸1.dwg</a>
              <a class="tab" href="#">公园规划图.dwg</a>
              <a class="tab current" href="#">公园绿化规划方案图纸.dwg <span>✕</span></a>
              <button class="tab-list" aria-label="文档列表"></button>
            </div>

            <svg class="canvas" viewBox="80 149 867 501" preserveAspectRatio="xMinYMin slice" role="img" aria-label="公园绿化规划方案图纸">
              <g class="plan">
                <path d="M479.500 149V650M585.500 209.500H410.500L322.500 297.500V383.500L410.500 471.500H672.500M585.500 209.500L672.500 296.500V559.500L582 650" />
                <path d="M247 149L446.500 348.500M258 160L269 149M634.500 160.500L947 474M634.500 537.500L747 650" />
                <path d="M80 230L148.500 298.500V383.500L80 452M80 490L148.500 558.500V648L146 650M847.500 646V650" />
              </g>
              <g class="path">
                <path d="M646 149L258 537" />
                <path d="M80 359.500L370.500 650" />
                <path d="M822 349L521 650" />
              </g>
              <g class="cursor">
                <path d="M81.500 154V256" stroke="#0f0" />
                <path d="M81 204.500H133M81 201.500H84.500V204" stroke="#f00" />
              </g>
              <g class="axes">
                <path d="M101.500 628V585.500M97.500 585.500L101.500 572.500 106.500 585.500Z" stroke="#0f0" />
                <path d="M102 628.500H144.500M144.500 623.500L158 628.500 144.500 633.500Z" stroke="#f00" />
                <path d="M97.500 623.500h9v9h-9zM98 553l3.500 4v5M105 553l-3.500 4M168 624l8 9M176 624l-8 9" stroke="#fff" />
              </g>
              <path class="pointer" d="M85 226L103 234 99 237 404 576 403 577 93 241 91 244Z" />
            </svg>

            <div class="sheets">
              <button aria-label="首页"><svg viewBox="0 0 12 10"><path d="M2 0v10" stroke="#000" stroke-width="2" /><path d="M9 0v10L4 5z" /></svg></button>
              <button aria-label="上一页"><svg viewBox="0 0 12 10"><path d="M8 0v10L3 5z" /></svg></button>
              <button aria-label="下一页"><svg viewBox="0 0 12 10"><path d="M4 0v10l5-5z" /></svg></button>
              <button aria-label="末页"><svg viewBox="0 0 12 10"><path d="M10 0v10" stroke="#000" stroke-width="2" /><path d="M3 0v10l5-5z" /></svg></button>
              <svg class="slant" viewBox="0 0 8 17"><path d="M0 0h8v16H7z" fill="#fff" stroke="none" /><path d="M0 0l7 16" /></svg>
              <a class="sheet-tab current" href="#">Model</a>
              <svg class="slant" viewBox="0 0 8 17"><path d="M0 0h8L1 15H0z" fill="#fff" stroke="none" /><path d="M8 1L1 15M4 8l4 7" /></svg>
              <a class="sheet-tab" href="#">Layout1</a>
              <svg class="slant" viewBox="0 0 8 17"><path d="M8 1L1 15" /></svg>
            </div>
          </section>

          <div class="sidebar">
            <i class="grip"></i>
            <button aria-label="移动"><svg><use href="#moveto" /></svg></button>
            <button aria-label="复制"><svg><use href="#copyto" /></svg></button>
            <button aria-label="偏移"><svg><use href="#offset" /></svg></button>
            <button aria-label="缩放"><svg><use href="#scale" /></svg></button>
            <button aria-label="删除"><svg><use href="#delete" /></svg></button>
            <i class="sep"></i>
            <button aria-label="旋转"><svg><use href="#rotate" /></svg></button>
            <button aria-label="三维旋转"><svg><use href="#rotate3d" /></svg></button>
            <i class="sep"></i>
            <button aria-label="镜像"><svg><use href="#mirror" /></svg></button>
            <button aria-label="三维镜像"><svg><use href="#mirror3d" /></svg></button>
            <i class="sep"></i>
            <button aria-label="阵列"><svg><use href="#array" /></svg></button>
            <button aria-label="三维阵列"><svg><use href="#array3d" /></svg></button>
            <i class="sep"></i>
            <button aria-label="打断"><svg><use href="#break" /></svg></button>
            <button aria-label="合并"><svg><use href="#join" /></svg></button>
            <button aria-label="修剪"><svg><use href="#trim" /></svg></button>
            <i class="sep"></i>
            <button aria-label="实体"><svg><use href="#solid" /></svg></button>
            <i class="sep"></i>
            <button aria-label="拉伸"><svg><use href="#stretch" /></svg></button>
            <i class="sep"></i>
            <button aria-label="延伸"><svg><use href="#extend" /></svg></button>
            <i class="sep"></i>
            <button aria-label="测量"><svg><use href="#measure" /></svg></button>
            <i class="sep"></i>
            <button aria-label="圆角"><svg><use href="#fillet" /></svg></button>
            <i class="sep"></i>
            <button aria-label="编辑多段线"><svg><use href="#pedit" /></svg></button>
            <button aria-label="编辑样条"><svg><use href="#splinedit" /></svg></button>
          </div>
        </main>

        <footer class="status">
          <span class="fold"></span>
          <span class="cell tight"></span>
          <span class="cell coords">2603,233995,0</span>
          <span class="cell mode">文本</span>
          <span class="cell engine">OpenGL</span>
          <span class="cell scale"><svg><use href="#compass" /></svg>1:1</span>
          <button class="cell lit" aria-label="注释可见"><svg><use href="#compass-bulb" /></svg></button>
          <button class="cell" aria-label="自动注释"><svg><use href="#compass-pen" /></svg></button>
          <button class="cell" aria-label="捕捉"><svg><use href="#gridsnap" /></svg></button>
          <button class="cell lit" aria-label="栅格"><svg><use href="#grid" /></svg></button>
          <button class="cell lit" aria-label="正交"><svg><use href="#ortho" /></svg></button>
          <button class="cell" aria-label="极轴"><svg><use href="#polar" /></svg></button>
          <button class="cell lit" aria-label="对象捕捉"><svg><use href="#osnap" /></svg></button>
          <button class="cell lit" aria-label="对象追踪"><svg><use href="#otrack" /></svg></button>
          <button class="cell" aria-label="十字光标"><svg><use href="#cross" /></svg></button>
          <span class="cell model">Mo</span>
          <span class="cell resize"><svg viewBox="0 0 8 8"><path d="M6 0h2v2H6zM3 3h2v2H3zM6 3h2v2H6zM0 6h2v2H0zM3 6h2v2H3zM6 6h2v2H6z" fill="#777b86" /></svg></span>
        </footer>
      </div>
    </div>
  </body>
</html>
```
FILE: styles.css
```css
* {
  box-sizing: border-box;
  padding: 0;
  margin: 0;
}

html,
body {
  height: 100%;
  overflow: hidden;
}

body {
  font-family: "Noto Sans", "Noto Sans CJK SC", sans-serif;
  font-size: 12px;
  color: #222;
}

a {
  color: inherit;
  text-decoration: none;
}

button {
  display: flex;
  align-items: center;
  justify-content: center;
  flex: none;
  border: 0;
  background: none;
  font: inherit;
}

svg {
  display: block;
  flex: none;
  width: 16px;
  height: 16px;
}

.sprite {
  position: absolute;
  width: 0;
  height: 0;
}

/* icon strokes */
.ink {
  fill: none;
  stroke: #25354e;
}

.thick {
  stroke-width: 2;
}

.gray {
  fill: none;
  stroke: #888;
}

.green {
  fill: none;
  stroke: #1a7943;
}

.blue {
  fill: none;
  stroke: #1565b4;
  stroke-width: 2;
}

.bluering {
  fill: none;
  stroke: #0c62c0;
  stroke-width: 2;
}

.red {
  fill: #fff;
  stroke: #f00;
}

.redline {
  fill: none;
  stroke: #ef1c24;
}

.node {
  fill: #fff;
  stroke: #2b6cc0;
}

.sheet {
  fill: #fff;
  stroke: #555;
}

.letter {
  font: bold 16px "Open Sans", sans-serif;
  fill: #2b56a0;
}

.tiny {
  font: bold 6px "Liberation Sans", sans-serif;
}

.abc {
  font: bold 8px "Open Sans", sans-serif;
}

.question {
  font: bold 13px "Open Sans", sans-serif;
  fill: #fff;
}

/* window frame */
.desktop {
  display: flex;
  height: 100%;
  padding: 0 15px 0 6px;
  background: linear-gradient(to right, #d0d0d0, #f3f3f3 10px, #fafafa) right / 15px 100% no-repeat #b1b1bb;
}

.window {
  display: flex;
  flex-direction: column;
  flex: 1;
  min-width: 0;
  border: solid #1c82d2;
  border-width: 0 1px;
  background: #cfd3dc;
}

.titlebar {
  display: flex;
  flex: none;
  height: 21px;
  padding-left: 8px;
  background: #fff;
}

.titlebar h1 {
  margin-left: 5px;
  font-size: 12px;
  font-weight: normal;
  line-height: 12px;
  white-space: nowrap;
  color: #000;
}

.logo {
  height: 12px;
}

.window-buttons {
  display: flex;
  padding-right: 1px;
  margin-left: auto;
}

.window-buttons button {
  width: 45px;
  height: 10px;
}

.window-buttons svg {
  width: 10px;
  height: 10px;
  fill: none;
  stroke: #000;
}

.menu {
  display: flex;
  flex: none;
  gap: 15px;
  height: 23px;
  padding-left: 16px;
  font-size: 13px;
  line-height: 20px;
  white-space: nowrap;
  color: #505661;
}

.menu span {
  font-family: Lato, sans-serif;
  font-size: 11px;
}

/* toolbars */
.toolbar-row {
  display: flex;
  flex: none;
  height: 28px;
  padding-left: 1px;
}

.toolbar-row.last {
  height: 27px;
}

.toolbar {
  display: flex;
  align-items: center;
  padding-left: 6px;
  border-radius: 3px;
  background: linear-gradient(#e9edf6, #e3e7f0 50%, #d2d5de);
}

.toolbar.spaced {
  padding-right: 17px;
}

.toolbar.fill {
  flex: 1;
}

.toolbar.clipped {
  width: 39px;
  padding-right: 14px;
  overflow: hidden;
}

.toolbar.clipped button {
  justify-content: flex-start;
  width: 13px;
  overflow: hidden;
}

.toolbar .grip {
  width: 3px;
  height: 22px;
  margin-right: 1px;
  background: repeating-linear-gradient(#a6a9b3 0 2px, transparent 2px 4px) left / 2px 100% no-repeat;
}

.toolbar button {
  width: 23px;
  height: 22px;
}

.toolbar .sep {
  flex: none;
  width: 8px;
  height: 14px;
  background: linear-gradient(to right, #a4a9b4 1px, #fff 1px 2px) center / 2px 100% no-repeat;
}

.toolbar .bar {
  width: 1px;
  height: 22px;
  margin-left: 2px;
  background: #959aa5;
}

.toolbar .on {
  border: 1px solid #b4a680;
  background: linear-gradient(#f6cf9b, #ffb452 45%, #ffee9c);
}

.combo {
  display: flex;
  align-items: center;
  flex: none;
  gap: 4px;
  width: 196px;
  height: 22px;
  padding: 1px 1px 1px 7px;
  margin: 0 2px;
  background: #fff;
}

.combo.small {
  width: 96px;
  padding-left: 3px;
}

.combo.layer {
  gap: 1px;
  padding-left: 2px;
}

.combo select {
  flex: 1;
  min-width: 0;
  height: 20px;
  border: 0;
  background: none;
  appearance: none;
  font: 10px "Liberation Mono", monospace;
  color: #000;
}

.combo.layer select {
  margin-left: 4px;
  font: 13px "Noto Sans CJK SC", sans-serif;
}

.combo .drop {
  display: flex;
  align-items: center;
  justify-content: center;
  width: 14px;
  height: 20px;
  background: linear-gradient(#e9edf5, #cfd3dc);
}

.drop::after {
  content: "";
  border: 3px solid transparent;
  border-top-color: #000;
  border-bottom: 0;
}

.swatch {
  width: 86px;
  height: 12px;
  border: 1px solid #000;
}

.swatch.square {
  width: 12px;
  margin-left: 2px;
}

.rule {
  width: 86px;
  height: 1px;
  background: #000;
}

/* side toolbars */
.workspace {
  display: flex;
  flex: 1;
  min-height: 0;
  padding: 1px 0 1px 1px;
}

.sidebar {
  display: flex;
  flex-direction: column;
  align-items: center;
  flex: none;
  width: 34px;
  padding: 5px 6px 0 0;
  border-radius: 3px;
  background: linear-gradient(to right, #e9edf6, #e0e4ed 50%, #cfd3dc);
}

.sidebar:last-child {
  overflow: hidden;
}

.sidebar.short {
  align-self: flex-start;
  height: 332px;
  margin-right: 1px;
}

.sidebar .grip {
  flex: none;
  width: 26px;
  height: 2px;
  margin: 0 0 2px 4px;
  background: repeating-linear-gradient(to right, #a6a9b3 0 2px, transparent 2px 4px);
}

.sidebar button {
  position: relative;
  width: 23px;
  height: 22px;
}

.sidebar .sep {
  flex: none;
  width: 15px;
  height: 8px;
  background: linear-gradient(#a4a9b4 1px, #fff 1px 2px) center / 100% 2px no-repeat;
}

.sidebar .hover {
  border: 1px solid #c6aa62;
  background: linear-gradient(#fff9e7, #ffe6a3 50%, #ffcf58);
}

.tooltip {
  position: absolute;
  z-index: 2;
  top: 35px;
  left: 15px;
  width: 61px;
  height: 21px;
  border: 1px solid #777;
  background: #fff;
  box-shadow: 2px 2px 2px rgba(0, 0, 0, 0.4);
  font-size: 12px;
  line-height: 19px;
  white-space: nowrap;
  color: #575757;
}

/* drawing */
.document {
  display: flex;
  flex-direction: column;
  flex: 1;
  min-width: 0;
  margin-right: 1px;
}

.tabs {
  display: flex;
  flex: none;
  height: 20px;
  padding: 1px 7px 1px 3px;
  background: linear-gradient(#d0d4dd, #e6eaf3);
}

.tab {
  display: flex;
  height: 18px;
  padding-right: 6px;
  font-size: 13px;
  line-height: 16px;
  white-space: nowrap;
  color: #000;
  background: linear-gradient(#a0a3aa 1px, transparent 1px) 18px 0 no-repeat;
  border-right: 1px solid #a0a3aa;
}

.tab::before {
  content: "";
  flex: none;
  width: 18px;
  margin-right: 7px;
  background: linear-gradient(to bottom right, transparent 48%, #a0a3aa 49% 51%, #e3e7f0 52%);
}

.tab + .tab {
  margin-left: -12px;
}

.tab.current {
  background: linear-gradient(#a0a3aa 1px, #fff 1px) 18px 0 no-repeat;
  font-weight: bold;
}

.tab.current::before {
  background: linear-gradient(to bottom right, transparent 48%, #a0a3aa 49% 51%, #fff 52%);
}

.tab span {
  margin-left: 8px;
  font-size: 12px;
}

.tab-list {
  width: 10px;
  margin-left: auto;
}

.tab-list::after {
  content: "";
  border: 5px solid transparent;
  border-top-color: #000;
  border-bottom: 0;
}

.canvas {
  flex: 1;
  width: 100%;
  min-height: 0;
  border: solid #fff;
  border-width: 1px 3px 0;
  outline: 1px solid #a4a7b0;
  background: #000;
  fill: none;
  shape-rendering: crispEdges;
}

.plan {
  stroke: #8a8a8a;
}

.path {
  stroke: #d08d4c;
}

.pointer {
  fill: #fb3b3b;
  shape-rendering: auto;
}

.sheets {
  display: flex;
  flex: none;
  height: 19px;
  padding: 0 3px;
  border-bottom: 2px solid #fff;
  background: #efefef;
}

.sheets button {
  width: 16px;
  height: 16px;
  border: 1px solid #fff;
  border-right-color: #999;
  border-bottom-color: #999;
}

.sheets button svg {
  width: 12px;
  height: 10px;
}

.sheets .slant {
  width: 8px;
  height: 17px;
  margin-left: 1px;
  fill: none;
  stroke: #000;
}

.sheet-tab {
  padding: 0 6px;
  font: 10px/17px "Liberation Mono", monospace;
  color: #000;
}

.sheet-tab.current {
  padding: 0 1px;
  background: #fff;
  font-size: 12px;
  font-weight: bold;
}

/* status bar */
.status {
  display: flex;
  flex: none;
  height: 19px;
  border-top: 1px solid #9398a3;
  background: linear-gradient(#d7dae1, #a7acb7 60%, #b9bdc6);
  line-height: 20px;
}

.fold {
  width: 18px;
  margin-right: auto;
  background: linear-gradient(to top right, #fff 49%, #777 50%, transparent 52%);
}

.status .cell {
  display: flex;
  align-items: center;
  justify-content: center;
  flex: none;
  width: 22px;
  border-left: 1px solid #858a95;
  white-space: nowrap;
  overflow: hidden;
}

.status .tight {
  width: 8px;
}

.status .coords {
  justify-content: flex-start;
  width: 127px;
  padding-left: 5px;
  font-size: 11px;
}

.status .mode {
  width: 32px;
  font-size: 13px;
}

.status .engine {
  width: 48px;
  font-size: 11px;
}

.status .scale {
  gap: 4px;
  width: 43px;
}

.status .lit {
  background: #e5e468;
}

.status .model {
  justify-content: flex-start;
  width: 17px;
  padding-left: 2px;
  font-size: 11px;
}

.status .resize {
  width: 18px;
}

.resize svg {
  width: 8px;
  height: 8px;
}
```
